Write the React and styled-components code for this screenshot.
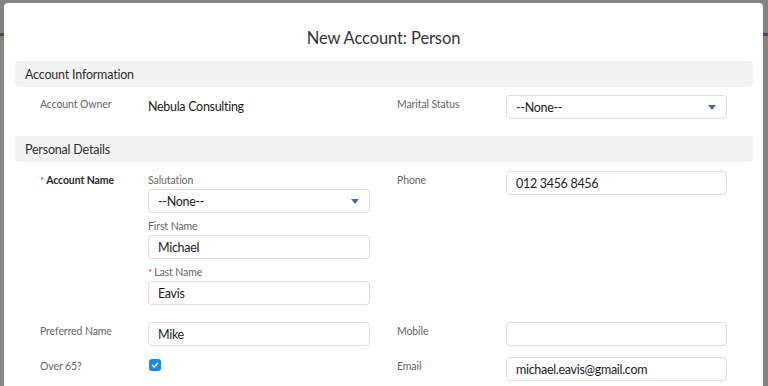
import React from 'react';
import styled, { createGlobalStyle } from 'styled-components';

const Global = createGlobalStyle`
  html, body { margin: 0; padding: 0; }
  body {
    font-family: Lato, "Open Sans", "Liberation Sans", sans-serif;
    background: #828282;
    overflow: hidden;
  }
`;

const Backdrop = styled.div`
  width: 768px;
  height: 386px;
  box-sizing: border-box;
  padding: 3px 5px 0 4px;
  overflow: hidden;
  background: linear-gradient(
    to bottom,
    #838383 0 33px,
    #4f4a4a 33px 36px,
    #8a827c 36px 46px,
    #848484 46px
  );
`;

const Modal = styled.div`
  height: 100%;
  background: #fff;
  border-radius: 4px 4px 0 0;
  overflow: hidden;
`;

const Header = styled.header`
  box-sizing: border-box;
  height: 58px;
  padding-top: 23px;
  text-align: center;
`;

const Title = styled.h2`
  margin: 0;
  font-size: 16.5px;
  letter-spacing: -0.1px;
  line-height: 24px;
  font-weight: 400;
  color: #333;
`;

const Body = styled.div`
  padding: 0 10px 0 11px;
`;

const SectionBar = styled.div`
  height: 26px;
  display: flex;
  align-items: center;
  margin-top: ${p => p.$top || 0}px;
  padding: 0 10px;
  background: #f3f2f2;
  border-radius: 4px;
  font-size: 12.5px;
  letter-spacing: -0.2px;
  color: #2f2f2f;
`;

const FormRow = styled.div`
  display: grid;
  grid-template-columns: 330px 330px;
  column-gap: 27px;
  padding-left: 25px;
  margin-top: ${p => p.$top}px;
  align-items: start;
`;

const Pair = styled.div`
  display: grid;
  grid-template-columns: ${p => p.$label}px 1fr;
  align-items: start;
`;

const Label = styled.div`
  font-size: 10.5px;
  letter-spacing: -0.1px;
  line-height: 18px;
  color: ${p => (p.$strong ? '#2b2b2b' : '#666')};
  font-weight: ${p => (p.$strong ? 700 : 400)};
`;

const Star = styled.span`
  color: #c23934;
  font-weight: 400;
  margin-right: 2px;
  font-size: 10px;
`;

const Value = styled.div`
  font-size: 12.5px;
  letter-spacing: -0.3px;
  line-height: 24px;
  color: #1c1c1c;
`;

const Input = styled.input`
  display: block;
  width: 100%;
  height: 24px;
  box-sizing: border-box;
  margin: 0;
  padding: 0 9px;
  border: 1px solid #d8dde6;
  border-radius: 4px;
  background: #fff;
  font-family: inherit;
  font-size: 12.5px;
  letter-spacing: -0.3px;
  color: #1c1c1c;
  outline: none;
`;

const Select = styled.div`
  height: 24px;
  box-sizing: border-box;
  display: flex;
  align-items: center;
  justify-content: space-between;
  padding: 0 9px;
  border: 1px solid #d8dde6;
  border-radius: 4px;
  font-size: 12.5px;
  letter-spacing: -0.3px;
  color: #1c1c1c;
`;

const Caret = styled.span`
  width: 0;
  height: 0;
  border-left: 4px solid transparent;
  border-right: 4px solid transparent;
  border-top: 5px solid #4f6a92;
  margin-right: 1px;
`;

const Stack = styled.div`
  display: flex;
  flex-direction: column;
  gap: 4px;
`;

const Group = styled.div`
  display: flex;
  flex-direction: column;
`;

const Check = styled.span`
  display: flex;
  align-items: center;
  justify-content: center;
  width: 12px;
  height: 12px;
  margin: 2px 0 0 1px;
  border-radius: 3px;
  background: #1589ee;
`;

const Field = ({ label, value, select, labelWidth = 108 }) => (
  <Pair $label={labelWidth}>
    <Label>{label}</Label>
    {select ? (
      <Select>
        {value}
        <Caret />
      </Select>
    ) : (
      <Input readOnly value={value} />
    )}
  </Pair>
);

export default function App() {
  return (
    <>
      <Global />
      <Backdrop>
        <Modal>
          <Header>
            <Title>New Account: Person</Title>
          </Header>
          <Body>
            <SectionBar>Account Information</SectionBar>
            <FormRow $top={8}>
              <Pair $label={108}>
                <Label>Account Owner</Label>
                <Value>Nebula Consulting</Value>
              </Pair>
              <Field label="Marital Status" value="--None--" select labelWidth={109} />
            </FormRow>

            <SectionBar $top={17}>Personal Details</SectionBar>

            <FormRow $top={9}>
              <Pair $label={108}>
                <Label $strong>
                  <Star>*</Star>Account Name
                </Label>
                <Stack>
                  <Group>
                    <Label>Salutation</Label>
                    <Select>
                      --None--
                      <Caret />
                    </Select>
                  </Group>
                  <Group>
                    <Label>First Name</Label>
                    <Input readOnly value="Michael" />
                  </Group>
                  <Group>
                    <Label>
                      <Star>*</Star>Last Name
                    </Label>
                    <Input readOnly value="Eavis" />
                  </Group>
                </Stack>
              </Pair>
              <Field label="Phone" value="012 3456 8456" labelWidth={109} />
            </FormRow>

            <FormRow $top={17}>
              <Field label="Preferred Name" value="Mike" />
              <Field label="Mobile" value="" labelWidth={109} />
            </FormRow>

            <FormRow $top={11}>
              <Pair $label={108}>
                <Label>Over 65?</Label>
                <Check>
                  <svg width="8" height="6" viewBox="0 0 8 6">
                    <path d="M1 3 L3.2 5 L7 1" fill="none" stroke="#fff" strokeWidth="1.3" />
                  </svg>
                </Check>
              </Pair>
              <Field label="Email" value="michael.eavis@gmail.com" labelWidth={109} />
            </FormRow>
          </Body>
        </Modal>
      </Backdrop>
    </>
  );
}
